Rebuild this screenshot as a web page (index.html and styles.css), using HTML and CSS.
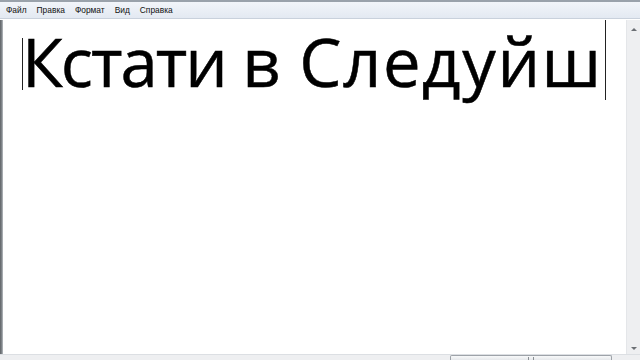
FILE: index.html
```html
<!DOCTYPE html>
<html lang="ru">
<head>
<meta charset="utf-8">
<title>Блокнот</title>
<link rel="stylesheet" href="styles.css">
</head>
<body>
<div class="window">
  <div class="frame-top"></div>
  <div class="menubar">
    <span class="menu-item">Файл</span>
    <span class="menu-item">Правка</span>
    <span class="menu-item">Формат</span>
    <span class="menu-item">Вид</span>
    <span class="menu-item">Справка</span>
  </div>
  <div class="editor">
    <div class="frame-left"></div>
    <div class="textarea">
      <div class="line"><span class="caret caret-start"></span><span class="text"><span class="w1">Кстати</span> <span class="w2">в</span> <span class="w3">Следуйш</span></span><span class="caret caret-end"></span></div>
    </div>
    <div class="vscroll">
      <span class="arrow arrow-up"></span>
      <span class="arrow arrow-down"></span>
    </div>
  </div>
  <div class="hscroll">
    <span class="harrow harrow-left"></span>
    <div class="htrack"><div class="hthumb"><span class="grip"></span></div></div>
    <span class="harrow harrow-right"></span>
    <div class="corner"></div>
  </div>
</div>
</body>
</html>
```
FILE: styles.css
```css
* { box-sizing: border-box; }
html, body { margin: 0; padding: 0; }
body { width: 640px; height: 360px; overflow: hidden; background: #fff; }
.window { display: flex; flex-direction: column; width: 640px; height: 360px; }
.frame-top { height: 2px; background: #9aa2ab; }
.menubar {
  height: 17px;
  display: flex;
  align-items: center;
  gap: 10px;
  padding-left: 6px;
  background: linear-gradient(#f2f5fa, #e3e9f2);
  border-bottom: 1px solid #c9d1dc;
  font-family: "Liberation Sans", Arial, sans-serif;
  font-size: 8.4px;
  color: #111;
}
.editor { flex: 1; display: flex; min-height: 0; border-top: 1px solid #fff; }
.frame-left { width: 3px; background: linear-gradient(90deg, #5e6266, #8a8f94 70%, #c8ccd0); }
.textarea { flex: 1; background: #fff; position: relative; }
.line {
  display: flex;
  align-items: flex-start;
  padding-left: 19px;
  padding-top: 6px;
  height: 80px;
}
.text {
  font-family: "Open Sans", "DejaVu Sans", sans-serif;
  font-size: 67px;
  line-height: 70px;
  color: #000;
  white-space: nowrap;
  -webkit-text-stroke: 0.5px #000;
}
.w1 { letter-spacing: -2px; }
.w2 { letter-spacing: -1px; margin-left: -1px; margin-right: 2px; }
.w3 { letter-spacing: 1.6px; }
.caret { display: block; width: 1px; background: #222; }
.caret-start { height: 52px; margin-top: 12px; margin-right: -1px; }
.caret-end { height: 80px; margin-top: -6px; margin-left: 2px; }
.vscroll {
  width: 14px;
  background: #eeeff1;
  border-left: 1px solid #e4e6e9;
  display: flex;
  flex-direction: column;
  justify-content: space-between;
  align-items: center;
  padding: 8px 0 4px;
}
.arrow { width: 0; height: 0; border-left: 3px solid transparent; border-right: 3px solid transparent; }
.arrow-up { border-bottom: 3px solid #6b6f74; }
.arrow-down { border-top: 3px solid #6b6f74; }
.hscroll {
  height: 6px;
  display: flex;
  align-items: flex-start;
  background: #eeeff1;
  border-top: 1px solid #dcdfe3;
}
.harrow { width: 10px; }
.htrack { flex: 1; padding-left: 440px; padding-right: 4px; }
.hthumb {
  width: 162px;
  height: 5px;
  border: 1px solid #9ea3a9;
  border-bottom: none;
  border-radius: 2px 2px 0 0;
  background: linear-gradient(#f8f9fa, #e6e8eb);
  display: flex;
  justify-content: center;
}
.grip { width: 6px; height: 3px; margin-top: 1px; border-left: 1px solid #8a8f94; border-right: 1px solid #8a8f94; }
.corner { width: 14px; background: #eeeff1; }
```
